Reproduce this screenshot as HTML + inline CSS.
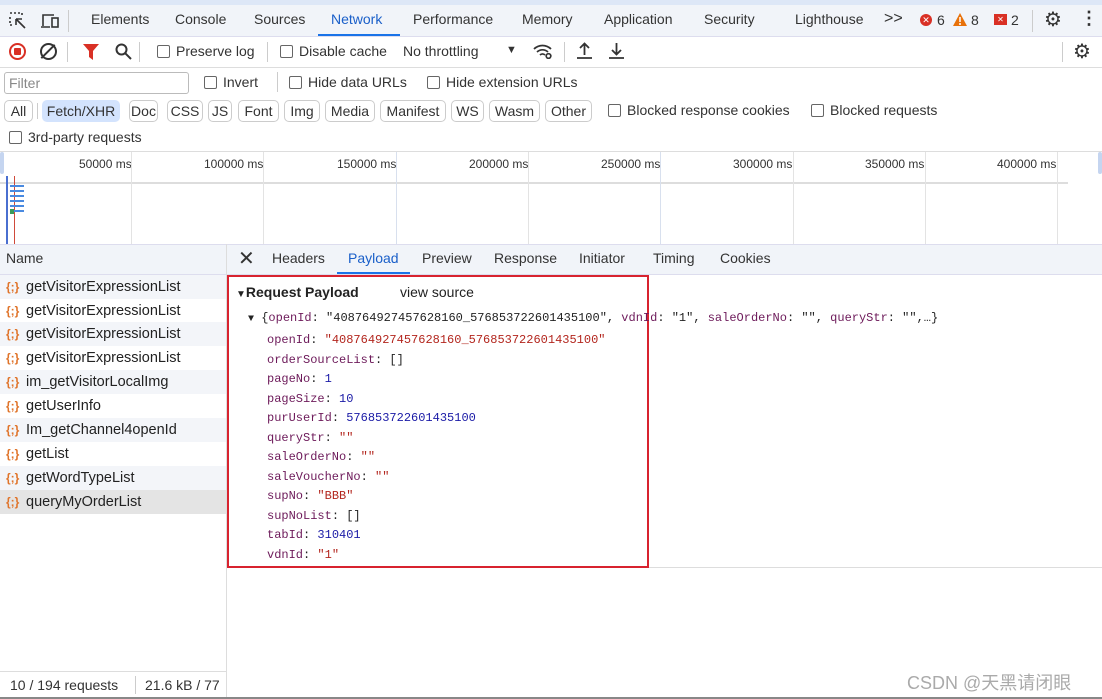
<!DOCTYPE html>
<html><head><meta charset="utf-8"><style>
*{box-sizing:border-box;margin:0;padding:0}
body{width:1102px;height:699px;overflow:hidden;background:#fff;font-family:"Liberation Sans","Noto Sans CJK SC",sans-serif;font-size:14px;color:#333;position:relative}
.a{position:absolute;white-space:nowrap}
.cb{display:inline-block;width:13px;height:13px;border:1px solid #666;border-radius:2px;vertical-align:-2px;margin-right:6px}
.pill{position:absolute;top:100px;height:22px;border:1px solid #ccc;border-radius:5px;line-height:20px;font-size:14px;color:#333;text-align:center}
.code{font-family:"Liberation Mono","Noto Sans CJK SC",monospace;font-size:12px;color:#222}
.k{color:#6d1a5a}.s{color:#b3261e}.n{color:#1a1aa6}
.row{position:absolute;left:0;width:226px;height:24px;line-height:24px;font-size:14.5px;color:#222;padding-left:26px}
.row i{position:absolute;left:6px;top:0;font-style:normal;color:#e0742a;font-size:12px;font-weight:bold}
</style></head><body>
<div class="a" style="left:0;top:0;width:1102px;height:5px;background:#dde7f7"></div>
<div class="a" style="left:0;top:5px;width:1102px;height:32px;background:#f1f4f9;border-bottom:1px solid #dde"></div>
<svg class="a" style="left:9px;top:12px" width="18" height="18" viewBox="0 0 18 18" fill="none" stroke="#333" stroke-width="1.6"><path d="M1 1h2M5 1h2M9 1h2M1 5v2M1 9v2M1 13h2M13 1v2" /><path d="M7 7l9 9M7 7h6M7 7v6"/></svg>
<svg class="a" style="left:40px;top:12px" width="20" height="18" viewBox="0 0 20 18" fill="none" stroke="#333" stroke-width="1.6"><path d="M3 14V3h11M1 15h9"/><rect x="12" y="6" width="6" height="9"/></svg>
<div class="a" style="left:68px;top:10px;width:1px;height:22px;background:#ccc"></div>
<div class="a" style="left:91px;top:11px">Elements</div>
<div class="a" style="left:175px;top:11px">Console</div>
<div class="a" style="left:254px;top:11px">Sources</div>
<div class="a" style="left:331px;top:11px;color:#1a5fc9">Network</div>
<div class="a" style="left:318px;top:34px;width:82px;height:2px;background:#1a73e8"></div>
<div class="a" style="left:413px;top:11px">Performance</div>
<div class="a" style="left:522px;top:11px">Memory</div>
<div class="a" style="left:604px;top:11px">Application</div>
<div class="a" style="left:704px;top:11px">Security</div>
<div class="a" style="left:795px;top:11px">Lighthouse</div>
<div class="a" style="left:884px;top:10px;font-size:16px">&gt;&gt;</div>
<div class="a" style="left:920px;top:14px;width:12px;height:12px;border-radius:6px;background:#d93025;color:#fff;font-size:9px;line-height:12px;text-align:center">✕</div>
<div class="a" style="left:937px;top:12px">6</div>
<svg class="a" style="left:953px;top:13px" width="14" height="13"><path d="M7 0L14 13H0z" fill="#e8710a"/><path d="M7 4v5M7 10v2" stroke="#fff" stroke-width="1.5"/></svg>
<div class="a" style="left:971px;top:12px">8</div>
<div class="a" style="left:994px;top:14px;width:13px;height:11px;background:#d93025;color:#fff;font-size:8px;line-height:11px;text-align:center">✕</div>
<div class="a" style="left:1011px;top:12px">2</div>
<div class="a" style="left:1032px;top:10px;width:1px;height:22px;background:#ccc"></div>
<div class="a" style="left:1044px;top:7px;font-size:20px;color:#333">⚙</div>
<div class="a" style="left:1080px;top:8px;font-size:18px;font-weight:bold">⋮</div>
<div class="a" style="left:0;top:67px;width:1102px;height:1px;background:#ddd"></div>
<div class="a" style="left:9px;top:43px;width:17px;height:17px;border:2px solid #d93025;border-radius:50%"></div>
<div class="a" style="left:14px;top:48px;width:7px;height:7px;background:#d93025;border-radius:1px"></div>
<div class="a" style="left:40px;top:43px;width:17px;height:17px;border:2px solid #333;border-radius:50%"></div>
<div class="a" style="left:47px;top:42px;width:2px;height:19px;background:#333;transform:rotate(45deg)"></div>
<div class="a" style="left:67px;top:42px;width:1px;height:20px;background:#ccc"></div>
<svg class="a" style="left:83px;top:44px" width="16" height="16"><path d="M0 0h16L10 7v9L6 13V7z" fill="#d93025"/></svg>
<svg class="a" style="left:115px;top:43px" width="17" height="17" fill="none" stroke="#333" stroke-width="2"><circle cx="6.5" cy="6.5" r="5"/><path d="M10 10l6 6"/></svg>
<div class="a" style="left:139px;top:42px;width:1px;height:20px;background:#ccc"></div>
<div class="a" style="left:157px;top:43px"><span class="cb"></span>Preserve log</div>
<div class="a" style="left:267px;top:42px;width:1px;height:20px;background:#ccc"></div>
<div class="a" style="left:280px;top:43px"><span class="cb"></span>Disable cache</div>
<div class="a" style="left:403px;top:43px">No throttling</div>
<div class="a" style="left:506px;top:44px;font-size:11px">▼</div>
<svg class="a" style="left:533px;top:43px" width="20" height="16" fill="none" stroke="#333" stroke-width="1.7"><path d="M1 6a12 12 0 0 1 17 0M4 9a8 8 0 0 1 11 0M7 12a3.5 3.5 0 0 1 5 0"/><circle cx="15.5" cy="13" r="2.3"/></svg>
<div class="a" style="left:564px;top:42px;width:1px;height:20px;background:#ccc"></div>
<svg class="a" style="left:576px;top:42px" width="17" height="18" fill="none" stroke="#333" stroke-width="1.8"><path d="M8.5 13V2M4 6l4.5-4.5L13 6M1 16h15"/></svg>
<svg class="a" style="left:608px;top:42px" width="17" height="18" fill="none" stroke="#333" stroke-width="1.8"><path d="M8.5 1v11M4 8l4.5 4.5L13 8M1 16h15"/></svg>
<div class="a" style="left:1062px;top:42px;width:1px;height:20px;background:#ccc"></div>
<div class="a" style="left:1073px;top:39px;font-size:20px">⚙</div>
<div class="a" style="left:4px;top:72px;width:185px;height:22px;border:1px solid #bbb;border-radius:3px;padding-left:4px;line-height:20px;color:#888">Filter</div>
<div class="a" style="left:204px;top:74px"><span class="cb"></span>Invert</div>
<div class="a" style="left:277px;top:72px;width:1px;height:20px;background:#ccc"></div>
<div class="a" style="left:289px;top:74px"><span class="cb"></span>Hide data URLs</div>
<div class="a" style="left:427px;top:74px"><span class="cb"></span>Hide extension URLs</div>
<div class="pill" style="left:4px;width:29px">All</div>
<div class="a" style="left:37px;top:103px;width:1px;height:16px;background:#ccc"></div>
<div class="pill" style="left:42px;width:78px;background:#d3e3fd;border-color:#d3e3fd">Fetch/XHR</div>
<div class="pill" style="left:129px;width:29px">Doc</div>
<div class="pill" style="left:167px;width:36px">CSS</div>
<div class="pill" style="left:208px;width:24px">JS</div>
<div class="pill" style="left:238px;width:41px">Font</div>
<div class="pill" style="left:284px;width:36px">Img</div>
<div class="pill" style="left:325px;width:50px">Media</div>
<div class="pill" style="left:380px;width:66px">Manifest</div>
<div class="pill" style="left:451px;width:33px">WS</div>
<div class="pill" style="left:489px;width:51px">Wasm</div>
<div class="pill" style="left:545px;width:47px">Other</div>
<div class="a" style="left:608px;top:102px"><span class="cb"></span>Blocked response cookies</div>
<div class="a" style="left:811px;top:102px"><span class="cb"></span>Blocked requests</div>
<div class="a" style="left:9px;top:129px"><span class="cb"></span>3rd-party requests</div>
<div class="a" style="left:0;top:151px;width:1102px;height:1px;background:#ddd"></div>
<div class="a" style="left:0;top:182px;width:1068px;height:2px;background:#ddd"></div>
<div class="a" style="left:0;top:152px;width:4px;height:22px;background:#c5d5f0;border-radius:2px"></div>
<div class="a" style="left:1098px;top:152px;width:4px;height:22px;background:#c5d5f0;border-radius:2px"></div>
<div class="a" style="font-size:12px;left:79px;top:157px">50000 ms</div>
<div class="a" style="font-size:12px;left:204px;top:157px">100000 ms</div>
<div class="a" style="font-size:12px;left:337px;top:157px">150000 ms</div>
<div class="a" style="font-size:12px;left:469px;top:157px">200000 ms</div>
<div class="a" style="font-size:12px;left:601px;top:157px">250000 ms</div>
<div class="a" style="font-size:12px;left:733px;top:157px">300000 ms</div>
<div class="a" style="font-size:12px;left:865px;top:157px">350000 ms</div>
<div class="a" style="font-size:12px;left:997px;top:157px">400000 ms</div>
<div class="a" style="left:131px;top:152px;width:1px;height:92px;background:#e3e3e3"></div>
<div class="a" style="left:263px;top:152px;width:1px;height:92px;background:#e3e3e3"></div>
<div class="a" style="left:396px;top:152px;width:1px;height:92px;background:#d8e0ee"></div>
<div class="a" style="left:528px;top:152px;width:1px;height:92px;background:#e3e3e3"></div>
<div class="a" style="left:660px;top:152px;width:1px;height:92px;background:#d8e0ee"></div>
<div class="a" style="left:793px;top:152px;width:1px;height:92px;background:#e3e3e3"></div>
<div class="a" style="left:925px;top:152px;width:1px;height:92px;background:#e3e3e3"></div>
<div class="a" style="left:1057px;top:152px;width:1px;height:92px;background:#e3e3e3"></div>
<div class="a" style="left:6px;top:176px;width:2px;height:68px;background:#4a6fd0"></div>
<div class="a" style="left:14px;top:176px;width:1px;height:68px;background:#d04a3a"></div>
<div class="a" style="left:10px;top:185px;width:14px;height:30px;background:repeating-linear-gradient(#4a8ae0 0 2px,transparent 2px 5px)"></div>
<div class="a" style="left:10px;top:209px;width:4px;height:5px;background:#3a9a5a"></div>
<div class="a" style="left:0;top:244px;width:1102px;height:31px;background:#f1f4f9;border-top:1px solid #dde;border-bottom:1px solid #dde"></div>
<div class="a" style="left:226px;top:244px;width:1px;height:455px;background:#ddd"></div>
<div class="a" style="left:6px;top:250px">Name</div>
<div class="a" style="left:238px;top:246px;font-size:20px">✕</div>
<div class="a" style="left:272px;top:250px">Headers</div>
<div class="a" style="left:348px;top:250px;color:#1a5fc9">Payload</div>
<div class="a" style="left:337px;top:272px;width:73px;height:2px;background:#1a73e8"></div>
<div class="a" style="left:422px;top:250px">Preview</div>
<div class="a" style="left:494px;top:250px">Response</div>
<div class="a" style="left:579px;top:250px">Initiator</div>
<div class="a" style="left:653px;top:250px">Timing</div>
<div class="a" style="left:720px;top:250px">Cookies</div>
<div class="row" style="top:275px;background:#f3f5f9"><i>{;}</i>getVisitorExpressionList</div>
<div class="row" style="top:299px"><i>{;}</i>getVisitorExpressionList</div>
<div class="row" style="top:322px;background:#f3f5f9"><i>{;}</i>getVisitorExpressionList</div>
<div class="row" style="top:346px"><i>{;}</i>getVisitorExpressionList</div>
<div class="row" style="top:370px;background:#f3f5f9"><i>{;}</i>im_getVisitorLocalImg</div>
<div class="row" style="top:394px"><i>{;}</i>getUserInfo</div>
<div class="row" style="top:418px;background:#f3f5f9"><i>{;}</i>Im_getChannel4openId</div>
<div class="row" style="top:442px"><i>{;}</i>getList</div>
<div class="row" style="top:466px;background:#f3f5f9"><i>{;}</i>getWordTypeList</div>
<div class="row" style="top:490px;background:#e4e4e4"><i>{;}</i>queryMyOrderList</div>
<div class="a" style="left:227px;top:567px;width:875px;height:1px;background:#ddd"></div>
<div class="a" style="left:227px;top:275px;width:422px;height:293px;border:2px solid #d8232f"></div>
<div class="a" style="left:236px;top:284px;font-weight:bold;color:#222"><span style="font-size:10px">▼</span>Request Payload</div>
<div class="a" style="left:400px;top:284px;color:#222">view source</div>
<div class="a code" style="left:248px;top:311px"><span style="font-size:10px">▼</span> {<span class="k">openId</span>: ″408764927457628160_576853722601435100″, <span class="k">vdnId</span>: ″1″, <span class="k">saleOrderNo</span>: ″″, <span class="k">queryStr</span>: ″″,…}</div>
<div class="a code" style="left:267px;top:331px;line-height:19.5px">
<span class="k">openId</span>: <span class="s">″408764927457628160_576853722601435100″</span><br>
<span class="k">orderSourceList</span>: []<br>
<span class="k">pageNo</span>: <span class="n">1</span><br>
<span class="k">pageSize</span>: <span class="n">10</span><br>
<span class="k">purUserId</span>: <span class="n">576853722601435100</span><br>
<span class="k">queryStr</span>: <span class="s">″″</span><br>
<span class="k">saleOrderNo</span>: <span class="s">″″</span><br>
<span class="k">saleVoucherNo</span>: <span class="s">″″</span><br>
<span class="k">supNo</span>: <span class="s">″BBB″</span><br>
<span class="k">supNoList</span>: []<br>
<span class="k">tabId</span>: <span class="n">310401</span><br>
<span class="k">vdnId</span>: <span class="s">″1″</span>
</div>
<div class="a" style="left:0;top:671px;width:226px;height:1px;background:#ddd"></div>
<div class="a" style="left:10px;top:677px;font-size:14px">10 / 194 requests</div>
<div class="a" style="left:135px;top:676px;width:1px;height:18px;background:#ccc"></div>
<div class="a" style="left:145px;top:677px;font-size:14px">21.6 kB / 77</div>
<div class="a" style="left:907px;top:669px;font-size:18px;color:#aaa">CSDN @天黑请闭眼</div>
<div class="a" style="left:0;top:697px;width:1102px;height:2px;background:#888"></div>
</body></html>
